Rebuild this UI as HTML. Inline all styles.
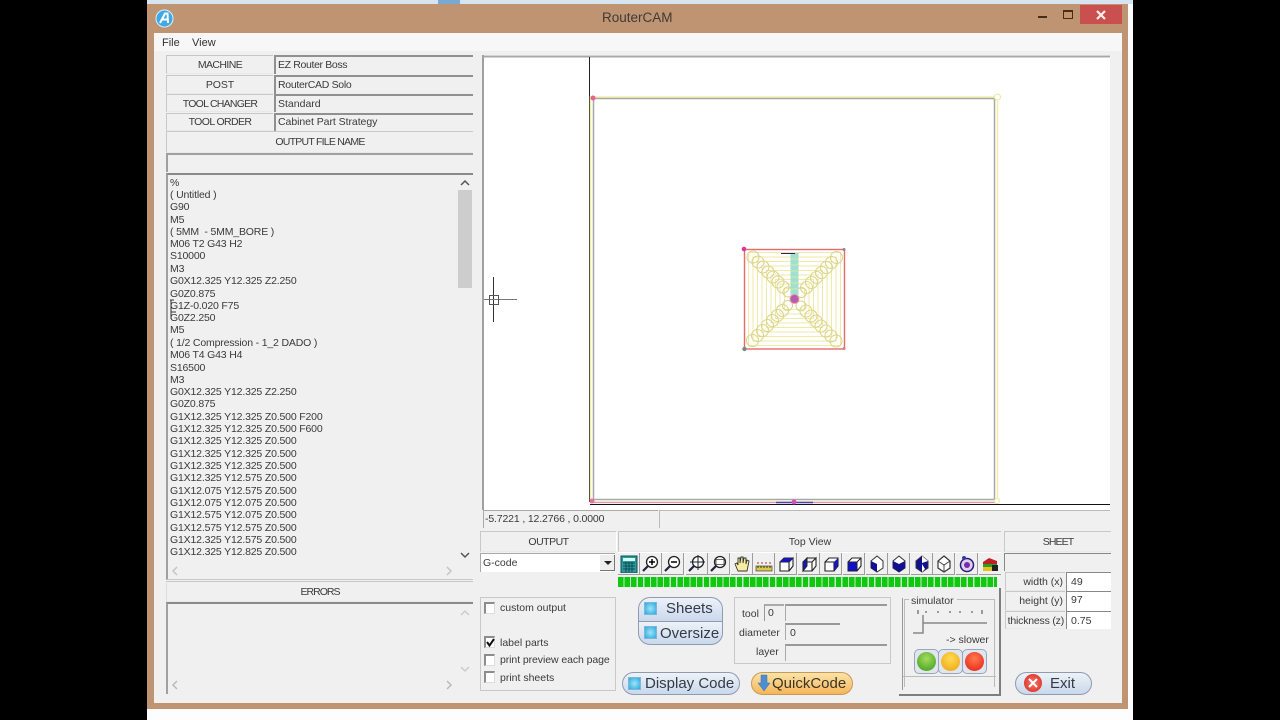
<!DOCTYPE html>
<html><head><meta charset="utf-8"><style>
html,body{margin:0;padding:0;width:1280px;height:720px;overflow:hidden;background:#000}
*{box-sizing:border-box}
body{font-family:"Liberation Sans",sans-serif;font-size:10.5px;color:#3a3a3a}
.a{position:absolute}
.t{position:absolute;white-space:nowrap;line-height:14px}
.lab{position:absolute;background:#f0f0f0;border-top:1px solid #c8c8c8;border-left:1px solid #c8c8c8;border-bottom:1px solid #e8e8e8;text-align:center;white-space:nowrap}
.fld{position:absolute;background:#f0f0f0;border-top:2px solid #909090;border-left:2px solid #909090;white-space:nowrap;padding-left:2px}
.code{position:absolute;left:170px;white-space:nowrap;line-height:12px;letter-spacing:-.17px}
.cb{position:absolute;width:11px;height:12px;background:#fff;border-top:2px solid #8d8d8d;border-left:2px solid #8d8d8d;border-right:1px solid #ddd;border-bottom:1px solid #ddd}
.pill{position:absolute;border:1px solid #8f9bb0;background:linear-gradient(#eef2f8,#c9d8ec);color:#333a48;font-size:15px;white-space:nowrap}
.sq{position:absolute;width:13px;height:13px;background:radial-gradient(#9fe4f8,#2ea9dc);border:1px solid #7fb6d8}
.tb{position:absolute;top:553px;width:22px;height:22px;background:#f0f0f0;border-right:1px solid #9c9c9c;border-bottom:1px solid #9c9c9c}
.tb svg{position:absolute;left:2px;top:2px}
.gl{position:absolute;width:25px;height:25px;top:649px;border:1px solid #9aa6b8;border-radius:5px;background:#dfe6ef}
.gl i{position:absolute;left:2px;top:2px;width:19px;height:19px;border-radius:50%}
</style></head><body>
<div class="a" style="left:147px;top:0;width:986px;height:720px;background:#fdfdfd"></div>
<div class="a" style="left:147px;top:0;width:986px;height:4px;background:#d7e3ee"></div>
<div class="a" style="left:438px;top:0;width:22px;height:4px;background:#79a9d2"></div>
<div class="a" style="left:147px;top:4px;width:981px;height:705px;background:#bf9472"></div>
<div class="a" style="left:154px;top:33px;width:968px;height:670px;background:#f0f0f0"></div>
<div class="a" style="left:154px;top:33px;width:968px;height:18px;background:#f7f7f7"></div>
<svg class="a" style="left:155px;top:9px" width="19" height="19" viewBox="0 0 19 19"><circle cx="9.5" cy="9.5" r="8.5" fill="#3fa9e6" stroke="#d8eefb"/><path d="M5 14 L10 4.500 L12.500 4.500 L13 14 M7 10.500 H12.500" fill="none" stroke="#fff" stroke-width="2"/></svg>
<div class="t" style="left:602px;top:11px;font-size:13.5px;color:#3f3a36">RouterCAM</div>
<div class="a" style="left:1038px;top:16px;width:9px;height:2px;background:#4a2c14"></div>
<div class="a" style="left:1063px;top:10px;width:10px;height:9px;border:1px solid #4a2c14;border-top-width:2px"></div>
<div class="a" style="left:1080px;top:5px;width:42px;height:19px;background:#c9504f"></div>
<svg class="a" style="left:1096px;top:10px" width="10" height="10"><path d="M1 1 L9 9 M9 1 L1 9" stroke="#fbeeee" stroke-width="2.200"/></svg>
<div class="t" style="left:162px;top:36px;font-size:11px;color:#333">File</div>
<div class="t" style="left:192px;top:36px;font-size:11px;color:#333">View</div>

<div class="lab" style="left:166px;top:55px;width:107px;height:19px;line-height:18px;letter-spacing:-.6px">MACHINE</div>
<div class="fld" style="left:274px;top:55px;width:199px;height:19px;line-height:16px;letter-spacing:-.35px">EZ Router Boss</div>
<div class="lab" style="left:166px;top:75px;width:107px;height:19px;line-height:18px;letter-spacing:-.1px">POST</div>
<div class="fld" style="left:274px;top:75px;width:199px;height:19px;line-height:16px;letter-spacing:-.3px">RouterCAD Solo</div>
<div class="lab" style="left:166px;top:94px;width:107px;height:18px;line-height:18px;letter-spacing:-.75px">TOOL CHANGER</div>
<div class="fld" style="left:274px;top:94px;width:199px;height:18px;line-height:16px">Standard</div>
<div class="lab" style="left:166px;top:113px;width:107px;height:18px;line-height:16px;letter-spacing:-.6px">TOOL ORDER</div>
<div class="fld" style="left:274px;top:113px;width:199px;height:18px;line-height:15px;letter-spacing:-.05px">Cabinet Part Strategy</div>
<div class="lab" style="left:166px;top:131px;width:307px;height:22px;line-height:21px;letter-spacing:-.75px">OUTPUT FILE NAME</div>
<div class="fld" style="left:166px;top:153px;width:307px;height:19px;border-color:#a0a0a0"></div>

<div class="a" style="left:166px;top:173px;width:307px;height:407px;border-top:2px solid #8a8a8a;border-left:2px solid #a0a0a0;border-bottom:1px solid #c8c8c8"></div>
<div class="a" style="left:458px;top:190px;width:14px;height:98px;background:#cdcdcd"></div>
<svg class="a" style="left:460px;top:179px" width="10" height="8"><path d="M1 6 L5 2 L9 6" fill="none" stroke="#555" stroke-width="1.500"/></svg>
<svg class="a" style="left:460px;top:551px" width="10" height="8"><path d="M1 2 L5 6 L9 2" fill="none" stroke="#555" stroke-width="1.500"/></svg>
<svg class="a" style="left:171px;top:566px" width="8" height="10"><path d="M6 1 L2 5 L6 9" fill="none" stroke="#c4c4c4" stroke-width="1.500"/></svg>
<svg class="a" style="left:445px;top:566px" width="8" height="10"><path d="M2 1 L6 5 L2 9" fill="none" stroke="#c4c4c4" stroke-width="1.500"/></svg>
<div class="code" style="top:177px">%</div>
<div class="code" style="top:189px">( Untitled )</div>
<div class="code" style="top:201px">G90</div>
<div class="code" style="top:214px">M5</div>
<div class="code" style="top:226px">( 5MM&nbsp; - 5MM_BORE )</div>
<div class="code" style="top:238px">M06 T2 G43 H2</div>
<div class="code" style="top:250px">S10000</div>
<div class="code" style="top:263px">M3</div>
<div class="code" style="top:275px">G0X12.325 Y12.325 Z2.250</div>
<div class="code" style="top:288px">G0Z0.875</div>
<div class="code" style="top:300px">G1Z-0.020 F75</div>
<div class="code" style="top:312px">G0Z2.250</div>
<div class="code" style="top:324px">M5</div>
<div class="code" style="top:337px">( 1/2 Compression - 1_2 DADO )</div>
<div class="code" style="top:349px">M06 T4 G43 H4</div>
<div class="code" style="top:362px">S16500</div>
<div class="code" style="top:374px">M3</div>
<div class="code" style="top:386px">G0X12.325 Y12.325 Z2.250</div>
<div class="code" style="top:398px">G0Z0.875</div>
<div class="code" style="top:411px">G1X12.325 Y12.325 Z0.500 F200</div>
<div class="code" style="top:423px">G1X12.325 Y12.325 Z0.500 F600</div>
<div class="code" style="top:435px">G1X12.325 Y12.325 Z0.500</div>
<div class="code" style="top:448px">G1X12.325 Y12.325 Z0.500</div>
<div class="code" style="top:460px">G1X12.325 Y12.325 Z0.500</div>
<div class="code" style="top:472px">G1X12.325 Y12.575 Z0.500</div>
<div class="code" style="top:485px">G1X12.075 Y12.575 Z0.500</div>
<div class="code" style="top:497px">G1X12.075 Y12.075 Z0.500</div>
<div class="code" style="top:509px">G1X12.575 Y12.075 Z0.500</div>
<div class="code" style="top:522px">G1X12.575 Y12.575 Z0.500</div>
<div class="code" style="top:534px">G1X12.325 Y12.575 Z0.500</div>
<div class="code" style="top:546px">G1X12.325 Y12.825 Z0.500</div>
<svg class="a" style="left:168px;top:298px" width="9" height="24"><path d="M6 2 L2 2 M3 2 V21 M3 14 H8" fill="none" stroke="#333" stroke-width="1"/></svg>

<div class="lab" style="left:166px;top:581px;width:307px;height:21px;line-height:20px;border-left:1px solid #ddd;letter-spacing:-1px">ERRORS</div>
<div class="a" style="left:166px;top:602px;width:307px;height:92px;border-top:2px solid #8a8a8a;border-left:2px solid #a0a0a0"></div>
<svg class="a" style="left:460px;top:609px" width="10" height="8"><path d="M1 6 L5 2 L9 6" fill="none" stroke="#ccc" stroke-width="1.500"/></svg>
<svg class="a" style="left:460px;top:665px" width="10" height="8"><path d="M1 2 L5 6 L9 2" fill="none" stroke="#ccc" stroke-width="1.500"/></svg>
<svg class="a" style="left:171px;top:680px" width="8" height="10"><path d="M6 1 L2 5 L6 9" fill="none" stroke="#bbb" stroke-width="1.500"/></svg>
<svg class="a" style="left:445px;top:680px" width="8" height="10"><path d="M2 1 L6 5 L2 9" fill="none" stroke="#bbb" stroke-width="1.500"/></svg>

<svg class="a" style="left:482px;top:55px" width="628" height="455" viewBox="482 55 628 455">
<defs><g id="dg" fill="none" stroke="#dcd587" stroke-width="1.100"><circle cx="753" cy="257" r="6"/><circle cx="758" cy="262" r="6"/><circle cx="763" cy="267" r="6"/><circle cx="768" cy="272" r="6"/><circle cx="773" cy="277" r="6"/><circle cx="778" cy="282" r="6"/><circle cx="783" cy="287" r="6"/><circle cx="788" cy="292" r="5"/></g></defs>
<rect x="482" y="55" width="628" height="455" fill="#fff"/>
<path d="M482 56.500 H1110" stroke="#a8a8a8" stroke-width="2"/>
<path d="M483 55 V510" stroke="#a0a0a0" stroke-width="2"/>
<path d="M589.500 57 V502" stroke="#222" stroke-width="1"/>
<path d="M590 504.500 H1110" stroke="#111" stroke-width="1"/>
<rect x="590.500" y="97" width="407" height="405" fill="none" stroke="#f3f0a4" stroke-width="1.500"/>
<rect x="593.500" y="98.500" width="401" height="401" fill="none" stroke="#a8a8a8" stroke-width="1.500"/>
<path d="M590 502.500 H998" stroke="#e890b8" stroke-width="1.200"/>
<circle cx="593" cy="98" r="2.500" fill="#e8608e"/>
<circle cx="997.500" cy="97" r="3" fill="#fff" stroke="#eee8a0"/>
<circle cx="592" cy="501" r="2.500" fill="#e870a0"/>
<circle cx="997" cy="501" r="2.500" fill="#fff" stroke="#eee8a0"/>
<path d="M776 502.500 H813" stroke="#5040a8" stroke-width="1.500"/>
<circle cx="794" cy="502" r="2.500" fill="#d050c0"/>
<g fill="none" stroke="#f0eaa6" stroke-width="1">
<rect x="748.500" y="252.500" width="92" height="93"/><rect x="753" y="257" width="83" height="84"/><rect x="757.500" y="261.500" width="74" height="75"/><rect x="762" y="266" width="65" height="66"/><rect x="766.500" y="270.500" width="56" height="57"/><rect x="771" y="275" width="47" height="48"/><rect x="775.500" y="279.500" width="38" height="39"/><rect x="780" y="284" width="29" height="30"/><rect x="784.500" y="288.500" width="20" height="21"/>
</g>
<use href="#dg"/><use href="#dg" transform="rotate(90 794.500 299)"/><use href="#dg" transform="rotate(180 794.500 299)"/><use href="#dg" transform="rotate(270 794.500 299)"/>
<rect x="790.500" y="253" width="8" height="42" fill="#9fe0d0"/>
<path d="M790 259 H799 M790 265 H799 M790 271 H799 M790 277 H799 M790 283 H799 M790 289 H799" stroke="#d8e8a8" stroke-width="1"/>
<rect x="744.500" y="249.500" width="100" height="99.500" fill="none" stroke="#e96a6a" stroke-width="1.400"/>
<circle cx="794.500" cy="299" r="4.500" fill="#b85cb0" stroke="#e89aa8"/>
<path d="M781 253.500 H795" stroke="#22227a" stroke-width="1"/>
<circle cx="744" cy="249" r="2.300" fill="#d83a90"/>
<circle cx="844" cy="249.500" r="1.500" fill="#888"/>
<circle cx="744.500" cy="349" r="2.200" fill="#7a8a80"/>
<circle cx="844" cy="348.500" r="1.500" fill="#c88"/>
<path d="M493.500 277 V322" stroke="#333" stroke-width="1"/>
<path d="M484 299.500 H517" stroke="#777" stroke-width="1"/>
<rect x="489.500" y="295.500" width="9" height="9" fill="none" stroke="#555" stroke-width="1"/>
</svg>

<div class="fld" style="left:483px;top:510px;width:175px;height:18px;border-width:1px 0 0 1px;border-color:#aaa;line-height:17px;padding-left:1px;letter-spacing:-.15px">-5.7221 , 12.2766 , 0.0000</div>
<div class="fld" style="left:659px;top:510px;width:451px;height:18px;border-width:1px 0 0 1px;border-color:#bbb"></div>

<div class="lab" style="left:480px;top:531px;width:137px;height:21px;line-height:20px;border-right:1px solid #fff;letter-spacing:-.5px">OUTPUT</div>
<div class="a" style="left:480px;top:553px;width:135px;height:19px;background:#fff;border-left:1px solid #aaa;border-top:1px solid #aaa;padding-left:2px;line-height:18px">G-code</div>
<div class="a" style="left:600px;top:555px;width:15px;height:16px;background:#eee;border-right:1px solid #777;border-bottom:1px solid #777"></div>
<div class="a" style="left:604px;top:561px;border-left:4px solid transparent;border-right:4px solid transparent;border-top:4px solid #222"></div>
<div class="lab" style="left:618px;top:531px;width:383px;height:21px;line-height:20px">Top View</div>

<div class="a" style="left:618px;top:552px;width:383px;height:23px;background:#f3f3f3;border-top:1px solid #fff"></div>
<div class="tb" style="left:618px"><svg width="18" height="18"><rect x="1" y="1" width="16" height="17" fill="#2f9a9a" stroke="#0c4a5a"/><rect x="3" y="3" width="12" height="3" fill="#cfe"/><path d="M3 8 H15 M3 11 H15 M3 14 H15 M6 7 V17 M9 7 V17 M12 7 V17" stroke="#0d4a5a"/></svg></div>
<div class="tb" style="left:640px"><svg width="18" height="18"><circle cx="10" cy="7" r="5.500" fill="#fff" stroke="#222" stroke-width="1.300"/><path d="M6 11 L1 16" stroke="#224" stroke-width="2.200"/><path d="M7 7 H13 M10 4 V10" stroke="#000" stroke-width="1.500"/></svg></div>
<div class="tb" style="left:662px"><svg width="18" height="18"><circle cx="10" cy="7" r="5.500" fill="#fff" stroke="#222" stroke-width="1.300"/><path d="M6 11 L1 16" stroke="#224" stroke-width="2.200"/><path d="M7 7 H13" stroke="#000" stroke-width="1.500"/></svg></div>
<div class="tb" style="left:686px"><svg width="18" height="18"><circle cx="10" cy="7" r="5.500" fill="#fff" stroke="#222" stroke-width="1.300"/><path d="M6 11 L1 16" stroke="#224" stroke-width="2.200"/><path d="M2 7 H17 M10 0 V15" stroke="#223" stroke-width="1"/></svg></div>
<div class="tb" style="left:708px"><svg width="18" height="18"><circle cx="10" cy="7" r="5.500" fill="#fff" stroke="#222" stroke-width="1.300"/><path d="M6 11 L1 16" stroke="#224" stroke-width="2.200"/><rect x="6" y="4.500" width="8" height="5" fill="none" stroke="#444" stroke-width=".8"/></svg></div>
<div class="tb" style="left:731px"><svg width="18" height="18"><path d="M5 16 L2 9 L4 8 L5 10 L5 3 L7 3 L7 8 L8 2 L10 2 L10 8 L11 3 L13 3 L13 9 L14 5 L16 6 L14 16 Z" fill="#f6eda0" stroke="#333" stroke-width=".9"/></svg></div>
<div class="tb" style="left:753px"><svg width="18" height="18"><path d="M2 8 H16" stroke="#b03030" stroke-dasharray="2 2"/><rect x="1" y="11" width="16" height="5" fill="#d8c848" stroke="#444" stroke-width=".7"/><path d="M3 11 V13 M6 11 V13 M9 11 V13 M12 11 V13 M15 11 V13" stroke="#333"/></svg></div>
<div class="tb" style="left:775px"><svg width="18" height="18"><path d="M3 7 H12 V16 H3 Z M3 7 L7 3 H16 L12 7 M12 16 L16 11 V3" fill="#fff" stroke="#222" stroke-width="1.100"/><path d="M7 3 H16 L12 7 H3 Z" fill="#1818b0"/></svg></div>
<div class="tb" style="left:798px"><svg width="18" height="18"><path d="M3 7 H12 V16 H3 Z M12 7 L16 3 V11 L12 16" fill="#fff" stroke="#222" stroke-width="1.100"/><path d="M3 7 L7 3 V11 L3 16 Z" fill="#1818b0" stroke="#223"/><path d="M7 3 H16" stroke="#222"/></svg></div>
<div class="tb" style="left:820px"><svg width="18" height="18"><path d="M3 7 H12 V16 H3 Z M3 7 L7 3 H16 V11 L12 16" fill="#fff" stroke="#222" stroke-width="1.100"/><path d="M12 7 L16 3 V11 L12 16 Z" fill="#1818b0"/></svg></div>
<div class="tb" style="left:843px"><svg width="18" height="18"><path d="M3 7 L7 3 H16 V11 L12 16" fill="#fff" stroke="#222" stroke-width="1.100"/><path d="M12 7 L16 3" stroke="#222"/><rect x="3" y="7" width="9" height="9" fill="#1010c8" stroke="#223"/></svg></div>
<div class="tb" style="left:866px"><svg width="18" height="18"><path d="M9 1 L15 6 V13 L9 17 L3 13 V6 Z" fill="#fff" stroke="#333"/><path d="M3 6 L9 9 V17 L3 13 Z" fill="#101090"/></svg></div>
<div class="tb" style="left:888px"><svg width="18" height="18"><path d="M9 1 L15 6 V13 L9 17 L3 13 V6 Z" fill="#fff" stroke="#333"/><path d="M3 6 L9 9 L15 6 V13 L9 17 L3 13 Z" fill="#101090"/></svg></div>
<div class="tb" style="left:911px"><svg width="18" height="18"><path d="M9 1 L15 6 V13 L9 17 L3 13 V6 Z" fill="#101090" stroke="#333"/><path d="M9 8 L15 6 L9 1 Z M9 9 V17 L12 14 Z" fill="#fff"/></svg></div>
<div class="tb" style="left:933px"><svg width="18" height="18"><path d="M9 1 L15 6 V13 L9 17 L3 13 V6 Z" fill="#fff" stroke="#333" stroke-width="1.200"/><path d="M3 6 L9 10 L15 6 M9 10 V17" fill="none" stroke="#445"/></svg></div>
<div class="tb" style="left:956px"><svg width="18" height="18"><circle cx="9" cy="10" r="6.500" fill="#ddd0ee" stroke="#2a1a7a" stroke-width="1.500"/><circle cx="9" cy="10" r="3" fill="#7a2aa8"/><circle cx="6" cy="3" r="2" fill="#3a3aa0"/></svg></div>
<div class="tb" style="left:979px;width:22px;border-right:none"><svg width="18" height="18"><path d="M2 7 L8 3 L16 6 V9 H2 Z" fill="#c02020"/><rect x="2" y="9" width="14" height="3" fill="#28a028"/><rect x="2" y="12" width="14" height="4" fill="#e8c020"/><path d="M11 10 H17 V16 H11 Z" fill="#222"/></svg></div>

<div class="a" style="left:618px;top:577px;width:379px;height:10px;background:repeating-linear-gradient(90deg,#0fc80f 0,#0fc80f 5.400px,#c6e8c6 5.400px,#c6e8c6 6.600px)"></div>

<div class="a" style="left:480px;top:597px;width:136px;height:94px;border:1px solid #c8c8c8"></div>
<div class="cb" style="left:484px;top:602px"></div>
<div class="t" style="left:500px;top:601px">custom output</div>
<div class="cb" style="left:484px;top:636px"></div>
<svg class="a" style="left:485px;top:637px" width="11" height="11"><path d="M2 5 L4.500 8.500 L9 2" fill="none" stroke="#111" stroke-width="2"/></svg>
<div class="t" style="left:500px;top:636px">label parts</div>
<div class="cb" style="left:484px;top:654px"></div>
<div class="t" style="left:500px;top:653px;letter-spacing:-.08px">print preview each page</div>
<div class="cb" style="left:484px;top:671px"></div>
<div class="t" style="left:500px;top:671px">print sheets</div>

<div class="pill" style="left:638px;top:597px;width:85px;height:25px;border-radius:12px 12px 0 0;border-bottom:1px solid #6a7488;line-height:22px;padding-left:27px;font-size:15px">Sheets</div>
<div class="pill" style="left:638px;top:621px;width:85px;height:24px;border-radius:0 0 12px 12px;line-height:23px;padding-left:21px">Oversize</div>
<div class="sq" style="left:644px;top:602px"></div>
<div class="sq" style="left:644px;top:626px"></div>
<div class="pill" style="left:622px;top:672px;width:118px;height:23px;border-radius:12px;line-height:22px;padding-left:22px">Display Code</div>
<div class="sq" style="left:628px;top:677px"></div>
<div class="pill" style="left:751px;top:672px;width:102px;height:23px;border-radius:12px;line-height:22px;padding-left:20px;background:linear-gradient(#fbe3a6,#f6b65a);border-color:#c89a58;color:#3a3428">QuickCode</div>
<svg class="a" style="left:757px;top:674px" width="14" height="18"><path d="M4 1 H10 V9 H13 L7 17 L1 9 H4 Z" fill="#4c8fd0" stroke="#3a70b0" stroke-width=".5"/></svg>
<div class="pill" style="left:1015px;top:672px;width:77px;height:23px;border-radius:12px;line-height:22px;padding-left:34px">Exit</div>
<div class="a" style="left:1024px;top:674px;width:18px;height:18px;border-radius:50%;background:radial-gradient(#f47a6a,#d8241c)"></div>
<svg class="a" style="left:1028px;top:678px" width="10" height="10"><path d="M1 1 L9 9 M9 1 L1 9" stroke="#fff" stroke-width="2"/></svg>

<div class="a" style="left:734px;top:597px;width:157px;height:67px;border:1px solid #c8c8c8"></div>
<div class="t" style="left:742px;top:607px">tool</div>
<div class="fld" style="left:764px;top:604px;width:20px;height:17px;border-top:2px solid #aaa;border-left:1px solid #999;padding-left:3px;line-height:15px">0</div>
<div class="fld" style="left:785px;top:604px;width:102px;height:17px;border-top:2px solid #999;border-left:1px solid #aaa"></div>
<div class="t" style="left:739px;top:626px">diameter</div>
<div class="fld" style="left:785px;top:623px;width:55px;height:17px;border-top:2px solid #999;border-left:1px solid #aaa;padding-left:4px;line-height:16px">0</div>
<div class="t" style="left:756px;top:645px">layer</div>
<div class="fld" style="left:785px;top:644px;width:102px;height:17px;border-top:2px solid #999;border-left:1px solid #aaa"></div>

<div class="a" style="left:899px;top:588px;width:102px;height:108px;border-right:2px solid #7e7e7e;border-bottom:2px solid #7e7e7e"></div>
<div class="a" style="left:902px;top:598px;width:1px;height:92px;background:#999"></div>
<div class="a" style="left:904px;top:599px;width:91px;height:88px;border:1px solid #bbb;border-bottom:none"></div>
<div class="a" style="left:903px;top:676px;width:93px;height:1px;background:#bbb"></div>
<div class="t" style="left:909px;top:594px;background:#f0f0f0;padding:0 3px 0 2px;font-size:10.500px">simulator</div>
<svg class="a" style="left:912px;top:608px" width="78" height="28"><path d="M6 2 V6 M14 3 V5 M26 3 V5 M38 3 V5 M48 3 V5 M60 3 V5 M70 2 V6" stroke="#444"/><path d="M11 15 H75" stroke="#888" stroke-width="1.500"/><path d="M11 7 V25 H1" fill="none" stroke="#888" stroke-width="1.500"/></svg>
<div class="t" style="left:946px;top:633px">-&gt; slower</div>
<div class="gl" style="left:914px"><i style="background:radial-gradient(circle at 50% 35%,#a4dc5c,#3c9a1c)"></i></div>
<div class="gl" style="left:938px"><i style="background:radial-gradient(circle at 50% 35%,#ffdc50,#eca010)"></i></div>
<div class="gl" style="left:962px"><i style="background:radial-gradient(circle at 50% 35%,#ff7a50,#e41c10)"></i></div>

<div class="lab" style="left:1004px;top:531px;width:107px;height:21px;line-height:20px;letter-spacing:-.9px">SHEET</div>
<div class="fld" style="left:1004px;top:553px;width:107px;height:18px;border-width:1px 0 0 1px;border-color:#888"></div>
<div class="lab" style="left:1005px;top:572px;width:60px;height:19px;line-height:19px;text-align:right;padding-right:2px">width (x)</div>
<div class="fld" style="left:1066px;top:572px;width:45px;height:19px;background:#fff;border-width:1px 0 0 1px;border-color:#888;line-height:18px;padding-left:4px">49</div>
<div class="lab" style="left:1005px;top:591px;width:60px;height:20px;line-height:18px;text-align:right;padding-right:2px">height (y)</div>
<div class="fld" style="left:1066px;top:591px;width:45px;height:20px;background:#fff;border-width:1px 0 0 1px;border-color:#888;line-height:17px;padding-left:4px">97</div>
<div class="lab" style="left:1005px;top:611px;width:60px;height:18px;line-height:18px;text-align:right;padding-right:1px;letter-spacing:-.2px">thickness (z)</div>
<div class="fld" style="left:1066px;top:611px;width:45px;height:18px;background:#fff;border-width:1px 0 0 1px;border-color:#888;line-height:18px;padding-left:4px">0.75</div>
</body></html>
